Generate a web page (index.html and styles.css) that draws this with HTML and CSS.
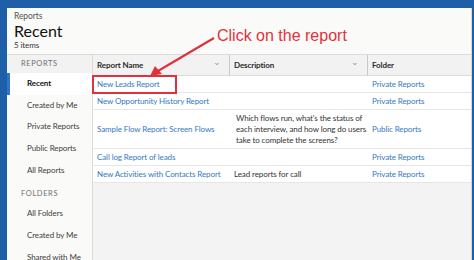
FILE: index.html
```html
<!DOCTYPE html>
<html lang="en">
<head>
    <meta charset="UTF-8">
    <meta name="viewport" content="width=device-width, initial-scale=1.0">
    <title>Reports - Recent</title>
    <link rel="stylesheet" href="styles.css">
</head>
<body>
    <div class="card">
        <div class="page_header">
            <div class="crumb">Reports</div>
            <div class="page_title">Recent</div>
            <div class="count">5 items</div>
        </div>

        <div class="body">
            <div class="sidebar">
                <div class="side_heading first">Reports</div>
                <div class="side_item active">Recent</div>
                <div class="side_item">Created by Me</div>
                <div class="side_item">Private Reports</div>
                <div class="side_item">Public Reports</div>
                <div class="side_item">All Reports</div>
                <div class="side_heading">Folders</div>
                <div class="side_item">All Folders</div>
                <div class="side_item">Created by Me</div>
                <div class="side_item">Shared with Me</div>
            </div>

            <div class="table_area">
                <div class="grid">
                    <div class="th">Report Name <span class="chev">&#8964;</span></div>
                    <div class="th">Description <span class="chev">&#8964;</span></div>
                    <div class="th last">Folder</div>

                    <div class="td"><a class="link boxed">New Leads Report</a></div>
                    <div class="td"></div>
                    <div class="td"><a class="link">Private Reports</a></div>

                    <div class="td"><a class="link">New Opportunity History Report</a></div>
                    <div class="td"></div>
                    <div class="td"><a class="link">Private Reports</a></div>

                    <div class="td"><a class="link">Sample Flow Report: Screen Flows</a></div>
                    <div class="td desc">Which flows run, what's the status of<br>each interview, and how long do users<br>take to complete the screens?</div>
                    <div class="td"><a class="link">Public Reports</a></div>

                    <div class="td"><a class="link">Call log Report of leads</a></div>
                    <div class="td"></div>
                    <div class="td"><a class="link">Private Reports</a></div>

                    <div class="td"><a class="link">New Activities with Contacts Report</a></div>
                    <div class="td">Lead reports for call</div>
                    <div class="td"><a class="link">Private Reports</a></div>
                </div>
            </div>
        </div>
    </div>

    <div class="note">Click on the report</div>
    <svg class="arrow" width="474" height="260" viewBox="0 0 474 260">
        <line x1="214" y1="38" x2="158" y2="71" stroke="#e0323e" stroke-width="2.2"/>
        <polygon points="150,76 155,66 162,74" fill="#e0323e"/>
    </svg>
</body>
</html>
```

FILE: styles.css
```css
body {
    margin: 0;
    width: 474px;
    height: 260px;
    overflow: hidden;
    background: #1f5fa8;
    font-family: Lato, "Noto Sans", sans-serif;
    font-size: 8px;
    letter-spacing: -0.1px;
    color: #2b2b2b;
    position: relative;
}

.card {
    margin: 8px 2px 0 7px;
    height: 252px;
    background: #fafaf9;
    border-right: 1px solid #d8d8d8;
    display: flex;
    flex-direction: column;
}

.page_header {
    height: 47px;
    flex: none;
    box-sizing: border-box;
    padding: 3px 0 0 7px;
    border-bottom: 1px solid #dddbda;
}

.crumb {
    font-size: 8.5px;
    color: #555;
    line-height: 11px;
}

.page_title {
    font-size: 16px;
    line-height: 18px;
    color: #111;
    letter-spacing: 0;
}

.count {
    font-size: 8px;
    line-height: 11px;
    color: #333;
}

.body {
    flex: 1;
    display: flex;
}

.sidebar {
    width: 85px;
    flex: none;
    background: #fafaf9;
    border-right: 1px solid #dddbda;
}

.side_heading {
    height: 18px;
    line-height: 18px;
    padding-left: 14px;
    text-transform: uppercase;
    letter-spacing: 0.6px;
    font-size: 7.5px;
    color: #707070;
    margin-top: 4px;
}

.side_heading.first {
    margin-top: 0;
    background: #f3f2f2;
}

.side_item {
    height: 21.7px;
    line-height: 21.7px;
    padding-left: 20px;
    color: #3e3e3c;
}

.side_item.active {
    font-weight: 700;
    color: #111;
    background: #fff;
    border-left: 3px solid #2f74c8;
    padding-left: 17px;
}

.table_area {
    flex: 1;
    background: #f3f3f3;
}

.grid {
    display: grid;
    grid-template-columns: 137px 138px 1fr;
    background: #fff;
}

.th {
    height: 20px;
    line-height: 20px;
    padding-left: 4px;
    padding-right: 8px;
    background: #f3f2f2;
    border-bottom: 1px solid #dddbda;
    border-right: 1px solid #c9c9c9;
    font-weight: 700;
    color: #2b2b2b;
    display: flex;
    justify-content: space-between;
}

.th.last {
    border-right: none;
}

.chev {
    color: #999;
    font-weight: 400;
    font-size: 9px;
    line-height: 14px;
}

.td {
    padding: 2.5px 4px;
    line-height: 11px;
    border-bottom: 1px solid #e6e6e6;
    display: flex;
    align-items: center;
    color: #333;
    white-space: nowrap;
}

.td.desc {
    padding: 2.5px 0 2.5px 6px;
}

.link {
    color: #3479c2;
}

.boxed {
    position: relative;
}

.boxed::after {
    content: "";
    position: absolute;
    left: -5px;
    top: -4px;
    right: -17px;
    bottom: -4px;
    border: 2px solid #e0323e;
}

.note {
    position: absolute;
    left: 217px;
    top: 27px;
    font-family: "Liberation Sans", Arial, sans-serif;
    font-size: 16px;
    letter-spacing: 0;
    color: #e0323e;
    line-height: 18px;
}

.arrow {
    position: absolute;
    left: 0;
    top: 0;
}
```
